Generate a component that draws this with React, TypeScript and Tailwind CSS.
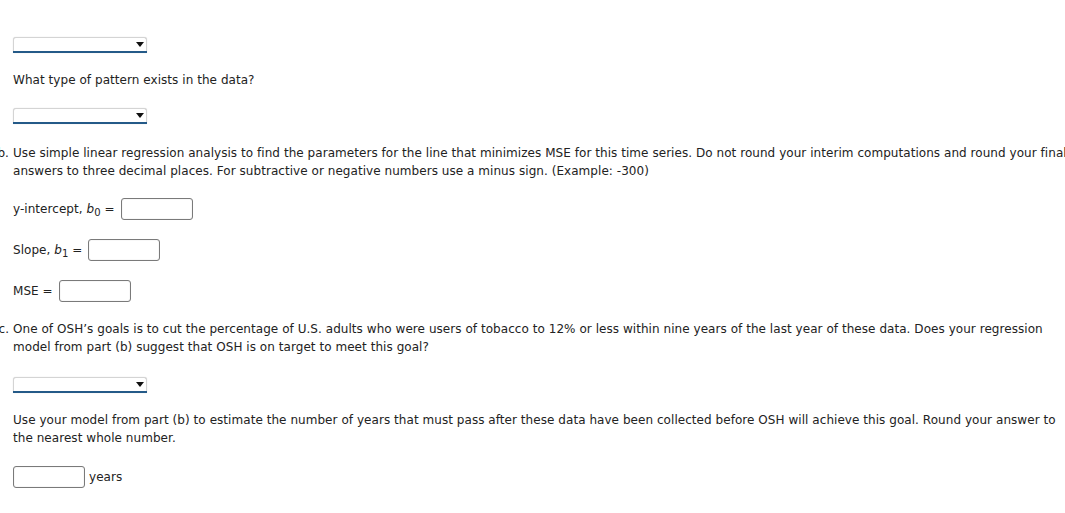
function Dropdown() {
  return (
    <div className="relative h-[16px] w-[134px] rounded-t-[3px] border border-b-0 border-[#d4d4d4] bg-white shadow-[0_0_1px_#ccc]">
      <div className="absolute inset-x-[-1px] bottom-0 h-[2px] bg-[#245a88]" />
      <svg className="absolute right-[2px] top-[4px]" width="8" height="5" viewBox="0 0 8 5">
        <path d="M0 0 H8 L4 5 Z" fill="#111" />
      </svg>
    </div>
  )
}

function Box({ w = 72 }: { w?: number }) {
  return (
    <div
      className="h-[22px] rounded-[3px] border border-[#7a7a7a] bg-white shadow-[inset_0_0_1px_#bbb]"
      style={{ width: w }}
    />
  )
}

function Sub({ n }: { n: string }) {
  return (
    <span>
      <i>b</i>
      <sub className="text-[10px] leading-none">{n}</sub>
    </span>
  )
}

export default function App() {
  return (
    <div className="min-h-[513px] overflow-hidden bg-white pl-[13px] text-[12px] leading-[18px] tracking-[0.05px] text-[#222] [font-family:'DejaVu_Sans',Verdana,sans-serif]">
      <div className="pt-[37px]">
        <Dropdown />
      </div>

      <p className="mt-[18px]">What type of pattern exists in the data?</p>

      <div className="mt-[19px]">
        <Dropdown />
      </div>

      <div className="mt-[20px] -ml-[17px] -mr-[14px] flex">
        <span className="w-[17px] shrink-0 pr-[4px] text-right">b.</span>
        <p>
          Use simple linear regression analysis to find the parameters for the line that minimizes MSE for this time series. Do not round your interim computations and round your final answers to three decimal places. For subtractive or negative numbers use a minus sign. (Example: -300)
        </p>
      </div>

      <div className="mt-[18px] flex items-center gap-[6px]">
        <span>
          y-intercept, <Sub n="0" /> =
        </span>
        <Box />
      </div>

      <div className="mt-[19px] flex items-center gap-[6px]">
        <span>
          Slope, <Sub n="1" /> =
        </span>
        <Box />
      </div>

      <div className="mt-[19px] flex items-center gap-[6px]">
        <span>MSE =</span>
        <Box />
      </div>

      <div className="mt-[18px] -ml-[17px] flex">
        <span className="w-[17px] shrink-0 pr-[4px] text-right">c.</span>
        <p>
          One of OSH’s goals is to cut the percentage of U.S. adults who were users of tobacco to 12% or less within nine years of the last year of these data. Does your regression model from part (b) suggest that OSH is on target to meet this goal?
        </p>
      </div>

      <div className="mt-[21px]">
        <Dropdown />
      </div>

      <p className="mt-[18px]">
        Use your model from part (b) to estimate the number of years that must pass after these data have been collected before OSH will achieve this goal. Round your answer to the nearest whole number.
      </p>

      <div className="mt-[19px] flex items-center gap-[4px] pb-[20px]">
        <Box />
        <span>years</span>
      </div>
    </div>
  )
}
